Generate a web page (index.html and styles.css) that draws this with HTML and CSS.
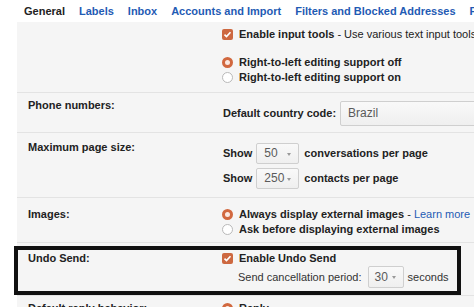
FILE: index.html
```html
<!DOCTYPE html>
<html lang="en">
<head>
  <meta charset="UTF-8" />
  <title>Settings – General</title>
  <link rel="stylesheet" href="styles.css">
</head>
<body>
  <div class="page">
    <nav class="tabs">
      <a class="tab active">General</a>
      <a class="tab">Labels</a>
      <a class="tab">Inbox</a>
      <a class="tab">Accounts and Import</a>
      <a class="tab">Filters and Blocked Addresses</a>
      <a class="tab">Forwarding and POP/IMAP</a>
    </nav>

    <div class="panel">
      <div class="row row-input">
        <div class="label"></div>
        <div class="content">
          <div class="opt"><span class="check"><svg viewBox="0 0 11 11"><path d="M2.5 5.6l2 2 4-4.4" /></svg></span><b>Enable input tools</b>&nbsp;- Use various text input tools to type in the language of your choice</div>
          <div class="group">
            <div class="opt"><span class="radio on"></span><b>Right-to-left editing support off</b></div>
            <div class="opt"><span class="radio"></span><b>Right-to-left editing support on</b></div>
          </div>
        </div>
      </div>

      <div class="row row-phone">
        <div class="label">Phone numbers:</div>
        <div class="content">
          <div class="line"><b>Default country code:</b><span class="select wide">Brazil</span></div>
        </div>
      </div>

      <div class="row row-size">
        <div class="label">Maximum page size:</div>
        <div class="content">
          <div class="line"><b>Show</b><span class="select">50<i class="arrow"></i></span><b>conversations per page</b></div>
          <div class="line"><b>Show</b><span class="select">250<i class="arrow"></i></span><b>contacts per page</b></div>
        </div>
      </div>

      <div class="row row-images">
        <div class="label">Images:</div>
        <div class="content">
          <div class="opt"><span class="radio on"></span><b>Always display external images</b>&nbsp;-&nbsp;<a class="link">Learn more</a></div>
          <div class="opt"><span class="radio"></span><b>Ask before displaying external images</b></div>
        </div>
      </div>

      <div class="row row-undo">
        <div class="label">Undo Send:</div>
        <div class="content">
          <div class="opt"><span class="check"><svg viewBox="0 0 11 11"><path d="M2.5 5.6l2 2 4-4.4" /></svg></span><b>Enable Undo Send</b></div>
          <div class="line plain">Send cancellation period:<span class="select small">30<i class="arrow"></i></span>seconds</div>
        </div>
      </div>

      <div class="row row-reply">
        <div class="label">Default reply behavior:</div>
        <div class="content">
          <div class="opt"><span class="radio on"></span><b>Reply</b></div>
        </div>
      </div>
    </div>
  </div>
</body>
</html>
```

FILE: styles.css
```css
body {
  margin: 0;
  font-family: 'Liberation Sans', Arial, sans-serif;
  font-size: 11px;
  color: #222;
  background: #fff;
  overflow: hidden;
}
.page {
  padding-left: 17px;
  white-space: nowrap;
}
.tabs {
  display: flex;
  height: 22px;
  align-items: center;
}
.tab {
  padding: 0 7px;
  height: 22px;
  line-height: 23px;
  font-weight: bold;
  color: #1f5bb4;
}
.tab.active {
  color: #222;
  background: #fff;
}
.panel {
  background: #f5f5f5;
}
.row {
  display: grid;
  grid-template-columns: 205px 1fr;
  border-bottom: 1px solid #e3e3e3;
  position: relative;
}
.label {
  padding-left: 11px;
  font-weight: bold;
  line-height: 15px;
}
.content {
  display: flex;
  flex-direction: column;
  line-height: 15px;
}
.opt {
  display: flex;
  align-items: center;
  height: 15px;
}
.line {
  display: flex;
  align-items: center;
  padding-left: 1px;
}
.line.plain {
  padding-left: 16px;
  color: #333;
}
.check {
  width: 11px;
  height: 11px;
  border-radius: 2px;
  background: #cd6840;
  margin-right: 6px;
  display: flex;
}
.check svg {
  width: 11px;
  height: 11px;
  fill: none;
  stroke: #fff;
  stroke-width: 1.6;
}
.radio {
  width: 9px;
  height: 9px;
  border-radius: 50%;
  border: 1px solid #b9b9b9;
  background: #fff;
  margin-right: 6px;
  box-sizing: content-box;
}
.radio.on {
  border: 3px solid #d1683f;
  width: 5px;
  height: 5px;
  background: #fbe9e2;
}
.select {
  display: inline-flex;
  align-items: center;
  position: relative;
  box-sizing: border-box;
  width: 43px;
  height: 21px;
  margin: 0 5px 0 4px;
  padding-left: 7px;
  border: 1px solid #cfcfcf;
  border-radius: 2px;
  background: linear-gradient(#f9f9f9, #efefef);
  color: #5a5a5a;
  font-size: 12px;
}
.select.wide {
  width: 140px;
  height: 25px;
}
.select.small {
  width: 36px;
  height: 22px;
  margin: 0 4px 0 6px;
  padding-left: 6px;
}
.arrow {
  position: absolute;
  right: 7px;
  top: 9px;
  border-left: 2px solid transparent;
  border-right: 2px solid transparent;
  border-top: 3px solid #999;
}
.link {
  color: #1f5bb4;
}
.row-input .content {
  padding: 5px 0 7px;
}
.row-input .group {
  margin-top: 13px;
}
.row-phone .label {
  padding-top: 5px;
}
.row-phone .content {
  padding: 8px 0 6px;
}
.row-size .label {
  padding-top: 7px;
}
.row-size .content {
  padding: 10px 0 8px;
  gap: 4px;
}
.row-images .label,
.row-images .content {
  padding-top: 9px;
}
.row-images .content {
  padding-bottom: 5px;
}
.row-undo .label {
  padding-top: 8px;
}
.row-undo .content {
  padding: 8px 0 7px;
}
.row-undo::after {
  content: "";
  position: absolute;
  left: -3px;
  right: 13px;
  top: 3px;
  bottom: 0;
  border: 4px solid #111;
}
.row-reply .label,
.row-reply .content {
  padding-top: 5px;
}
```
